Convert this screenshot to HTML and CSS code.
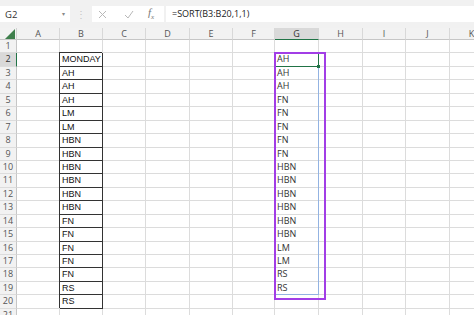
FILE: index.html
```html
<!DOCTYPE html>
<html lang="en">
  <head>
    <meta charset="UTF-8" />
    <meta name="viewport" content="width=device-width, initial-scale=1.0" />
    <title>SORT example</title>
    <link rel="stylesheet" href="styles.css">
  </head>
  <body>
    <div class="formula-bar">
      <div class="name-box">
        <span>G2</span>
        <span class="drop">&#9662;</span>
      </div>
      <div class="grip">&#8942;</div>
      <div class="fx-buttons">
        <svg class="btn" width="9" height="9" viewBox="0 0 9 9">
          <path d="M1 1 L8 8 M8 1 L1 8" />
        </svg>
        <svg class="btn" width="10" height="9" viewBox="0 0 10 9">
          <path d="M1 5 L4 8 L9 1" />
        </svg>
        <span class="fx">f<sub>x</sub></span>
      </div>
      <div class="formula">=SORT(B3:B20,1,1)</div>
    </div>

    <div class="sheet" id="sheet">
      <div class="spill"></div>
      <div class="selected"></div>
      <div class="callout"></div>
    </div>

    <script>
      const cols = ["A", "B", "C", "D", "E", "F", "G", "H", "I", "J", "K"];
      const days = [
        "AH", "AH", "AH", "LM", "LM",
        "HBN", "HBN", "HBN", "HBN", "HBN", "HBN",
        "FN", "FN", "FN", "FN", "FN",
        "RS", "RS",
      ];
      // what =SORT(B3:B20,1,1) spills into G2:G19
      const sorted = [...days].sort();
      const sheet = document.getElementById("sheet");

      function add(cls, text) {
        const div = document.createElement("div");
        div.className = cls;
        div.textContent = text || "";
        sheet.appendChild(div);
        return div;
      }

      const corner = add("corner");
      corner.innerHTML =
        '<svg width="17" height="12" viewBox="0 0 17 12"><polygon points="5,11 15,11 15,1" /></svg>';

      cols.forEach((c) => add(c === "G" ? "col-head active" : "col-head", c));

      for (let r = 1; r <= 21; r++) {
        add(r === 2 ? "row-head active" : "row-head", r);
        cols.forEach((c) => {
          let cls = "cell";
          let text = "";
          if (c === "B" && r >= 2 && r <= 20) {
            cls += " boxed";
            text = r === 2 ? "MONDAY" : days[r - 3];
          }
          if (c === "G" && r >= 2 && r <= 19) {
            cls += " spilled";
            text = sorted[r - 2];
          }
          add(cls, text);
        });
      }
    </script>
  </body>
</html>
```

FILE: styles.css
```css
body {
  margin: 0;
  width: 474px;
  height: 315px;
  overflow: hidden;
  background: #fff;
  font-family: "Open Sans", Arial, sans-serif;
}

/* formula bar */
.formula-bar {
  display: flex;
  height: 28px;
  padding-top: 6px;
  box-sizing: border-box;
  background: #f1f1f1;
}
.name-box {
  width: 70px;
  height: 16px;
  padding: 0 5px;
  box-sizing: border-box;
  display: flex;
  align-items: center;
  justify-content: space-between;
  background: #fff;
  font-size: 9.5px;
  color: #333;
}
.name-box .drop {
  font-size: 6px;
  color: #888;
}
.grip {
  width: 22px;
  text-align: center;
  line-height: 16px;
  font-size: 10px;
  color: #c4c4c4;
}
.fx-buttons {
  width: 72px;
  height: 16px;
  padding-left: 6px;
  box-sizing: border-box;
  display: flex;
  align-items: center;
  background: #fff;
}
.btn {
  fill: none;
  stroke: #b8b8b8;
  stroke-width: 1;
}
.btn + .btn {
  margin-left: 17px;
}
.fx {
  margin-left: 14px;
  font-family: "Liberation Serif", serif;
  font-style: italic;
  font-size: 11px;
  color: #777;
}
.fx sub {
  font-size: 7px;
}
.formula {
  flex: 1;
  height: 16px;
  margin-left: 2px;
  padding-left: 6px;
  background: #fff;
  font-size: 9px;
  line-height: 16px;
  color: #222;
}

/* grid */
.sheet {
  position: relative;
  display: grid;
  grid-template-columns: 17px 43px 43px 43px 44px 43px 42px 44px 44px 43px 44px 44px;
  grid-template-rows: 12px repeat(21, 13.45px);
  font-size: 9px;
}
.corner,
.col-head,
.row-head {
  background: #f2f2f2;
  box-sizing: border-box;
  color: #555;
}
.corner {
  border-right: 1px solid #d2d2d2;
  border-bottom: 1px solid #c6c6c6;
}
.corner svg {
  display: block;
  fill: #3f7f4c;
}
.col-head {
  border-right: 1px solid #d8d8d8;
  border-bottom: 1px solid #c6c6c6;
  text-align: center;
  line-height: 11px;
}
.row-head {
  border-right: 1px solid #c6c6c6;
  border-bottom: 1px solid #dcdcdc;
  text-align: center;
  line-height: 12.45px;
}
.col-head.active {
  background: #d9d9d9;
  border-bottom: 1px solid #217346;
  color: #333;
}
.row-head.active {
  background: #d9d9d9;
  border-right: 1px solid #217346;
  color: #333;
}
.cell {
  border-right: 1px solid #dcdcdc;
  border-bottom: 1px solid #dcdcdc;
  box-sizing: border-box;
  padding-left: 2px;
  line-height: 12.45px;
  white-space: nowrap;
  overflow: hidden;
  color: #222;
}
.cell.boxed {
  border-right-color: #333;
  border-bottom-color: #333;
  box-shadow: -1px -1px 0 #333;
  font-family: "Liberation Sans", Arial, sans-serif;
  color: #111;
}
.cell.spilled {
  color: #333;
}

/* overlays on G2:G19 */
.spill {
  position: absolute;
  grid-column: 8 / 9;
  grid-row: 3 / 21;
  inset: -1px 0 0 -1px;
  border: 1px solid #93b3e2;
  z-index: 1;
}
.selected {
  position: absolute;
  grid-column: 8 / 9;
  grid-row: 3 / 4;
  inset: -1px 0 0 -1px;
  border: 1px solid #217346;
  z-index: 2;
}
.selected::after {
  content: "";
  position: absolute;
  right: -2px;
  bottom: -2px;
  width: 3px;
  height: 3px;
  background: #217346;
}
.callout {
  position: absolute;
  grid-column: 8 / 9;
  grid-row: 3 / 21;
  inset: -1.5px -7px -5px -1.5px;
  border: 2.5px solid #a23ee6;
  z-index: 3;
}
```
